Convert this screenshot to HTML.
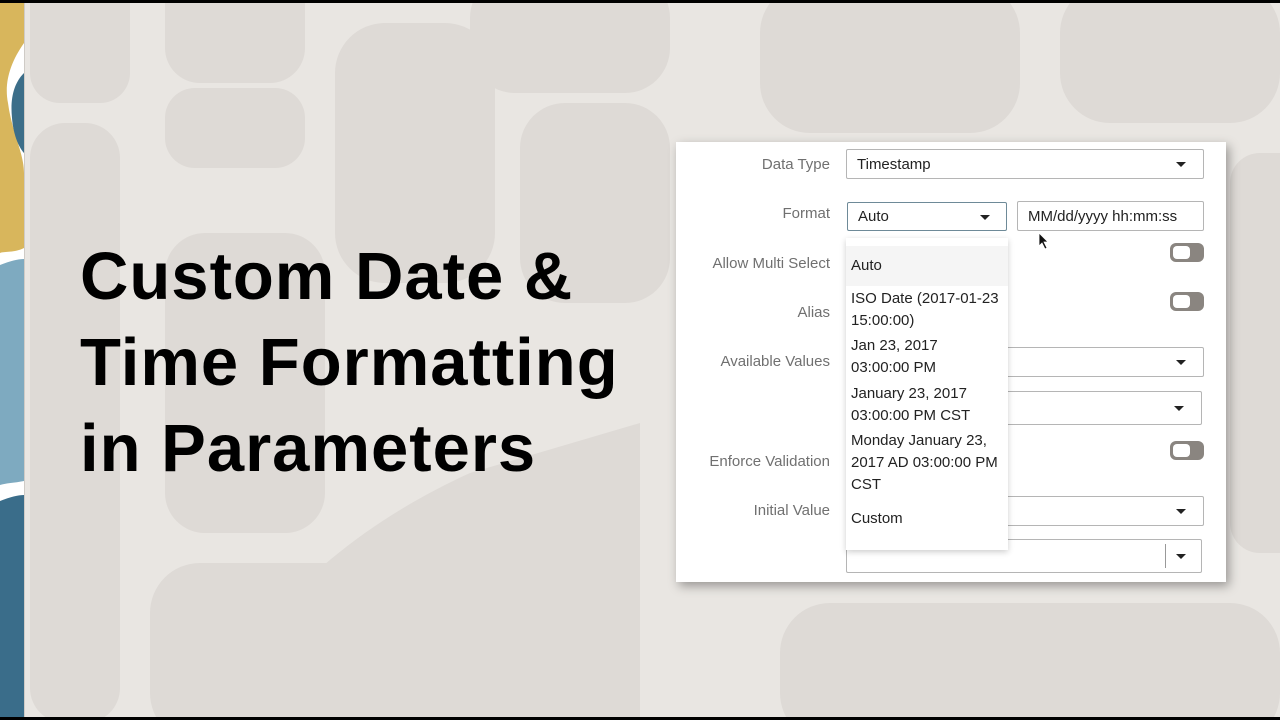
<!DOCTYPE html>
<html><head><meta charset="utf-8"><style>
*{margin:0;padding:0;box-sizing:border-box}
body{width:1280px;height:720px;overflow:hidden;background:#000;font-family:"Liberation Sans",sans-serif;position:relative}
#bg{position:absolute;left:0;top:3px;width:1280px;height:714px;background:#e9e6e2;overflow:hidden}
.title{position:absolute;left:80px;top:234px;font-weight:bold;font-size:67px;line-height:86px;color:#000;letter-spacing:1px}
.panel{position:absolute;left:676px;top:142px;width:550px;height:440px;background:#fff;box-shadow:3px 4px 10px rgba(0,0,0,.35)}
.lbl{position:absolute;right:396px;font-size:15px;color:#707070;text-align:right;white-space:nowrap}
.box{position:absolute;border:1px solid #b5b5b5;border-radius:2px;background:#fff;font-size:15px;color:#222;padding-left:10px;display:flex;align-items:center}
.arr{position:absolute;width:0;height:0;border-left:5px solid transparent;border-right:5px solid transparent;border-top:5px solid #222}
.tog{position:absolute;width:34px;height:19px;border-radius:6px;background:#8a8580}
.tog::after{content:"";position:absolute;left:3px;top:3px;width:17px;height:13px;border-radius:4px;background:#fff}
.dd{position:absolute;left:170px;top:96px;width:162px;height:312px;background:#fff;box-shadow:0 2px 6px rgba(0,0,0,.2);font-size:15px;color:#222}
.dd div{position:absolute;left:5px;line-height:22px}
</style></head><body>
<div id="bg">
<svg width="1280" height="714" style="position:absolute;left:0;top:0">
<g fill="#dedad6">
<rect x="30" y="-40" width="100" height="140" rx="30"/>
<rect x="165" y="-40" width="140" height="120" rx="35"/>
<rect x="30" y="120" width="90" height="600" rx="35"/>
<rect x="165" y="85" width="140" height="80" rx="30"/>
<rect x="165" y="230" width="160" height="300" rx="40"/>
<rect x="335" y="20" width="160" height="260" rx="50"/>
<rect x="470" y="-30" width="200" height="120" rx="45"/>
<rect x="520" y="100" width="150" height="200" rx="45"/>
<rect x="760" y="-20" width="260" height="150" rx="50"/>
<rect x="1060" y="-20" width="220" height="140" rx="50"/>
<rect x="150" y="560" width="260" height="180" rx="50"/>
<path d="M200 720 C260 600 360 520 470 470 L640 420 L640 720 Z"/>
<rect x="780" y="600" width="500" height="140" rx="50"/>
<rect x="1230" y="150" width="80" height="400" rx="30"/>
</g>
</svg>
<svg width="24" height="714" style="position:absolute;left:0;top:0">
<rect width="24" height="714" fill="#fff"/>
<path d="M0 0H24V40C10 60 4 80 8 100C12 130 24 150 24 170V245C14 250 5 248 0 250Z" fill="#d8b65c"/>
<path d="M24 70C14 80 10 95 12 115C14 140 24 150 24 150Z" fill="#3c6e89"/>
<path d="M0 262C10 258 18 256 24 256V478C14 480 6 480 0 482Z" fill="#7eaac0"/>
<path d="M0 498C10 494 18 492 24 492V714H0Z" fill="#3a6d8a"/>
</svg>
<div style="position:absolute;left:24px;top:0;width:1px;height:714px;background:#cfcbc6"></div>
</div>
<div class="title">Custom Date &amp;<br>Time Formatting<br>in Parameters</div>
<div class="panel">
<div class="lbl" style="top:14px">Data Type</div>
<div class="box" style="left:170px;top:7px;width:358px;height:30px">Timestamp<span class="arr" style="right:17px;top:12px"></span></div>
<div class="lbl" style="top:63px">Format</div>
<div class="box" style="left:171px;top:60px;width:160px;height:29px;border-color:#6e8a98">Auto<span class="arr" style="right:16px;top:12px"></span></div>
<div class="box" style="left:341px;top:59px;width:187px;height:30px">MM/dd/yyyy hh:mm:ss</div>
<div class="lbl" style="top:113px">Allow Multi Select</div>
<div class="tog" style="left:494px;top:101px"></div>
<div class="lbl" style="top:162px">Alias</div>
<div class="tog" style="left:494px;top:150px"></div>
<div class="lbl" style="top:211px">Available Values</div>
<div class="box" style="left:170px;top:205px;width:358px;height:30px"><span class="arr" style="right:17px;top:12px"></span></div>
<div class="box" style="left:170px;top:249px;width:356px;height:34px"><span class="arr" style="right:17px;top:14px"></span></div>
<div class="lbl" style="top:311px">Enforce Validation</div>
<div class="tog" style="left:494px;top:299px"></div>
<div class="lbl" style="top:360px">Initial Value</div>
<div class="box" style="left:170px;top:354px;width:358px;height:30px"><span class="arr" style="right:17px;top:12px"></span></div>
<div class="box" style="left:170px;top:397px;width:356px;height:34px"><span style="position:absolute;right:35px;top:4px;width:1px;height:24px;background:#999"></span><span class="arr" style="right:15px;top:14px"></span></div>
<div class="dd">
<div style="left:0;top:8px;width:162px;height:40px;background:#f5f5f5"></div>
<div style="top:17px">Auto</div>
<div style="top:50px">ISO Date (2017-01-23<br>15:00:00)</div>
<div style="top:97px">Jan 23, 2017<br>03:00:00 PM</div>
<div style="top:145px">January 23, 2017<br>03:00:00 PM CST</div>
<div style="top:192px">Monday January 23,<br>2017 AD 03:00:00 PM<br>CST</div>
<div style="top:270px">Custom</div>
</div>
<svg style="position:absolute;left:362px;top:90px" width="12" height="18"><path d="M1 1L1 14L4 11L7 17L9 16L6 10L10 10Z" fill="#111" stroke="#fff" stroke-width="0.8"/></svg>
</div>
</body></html>
